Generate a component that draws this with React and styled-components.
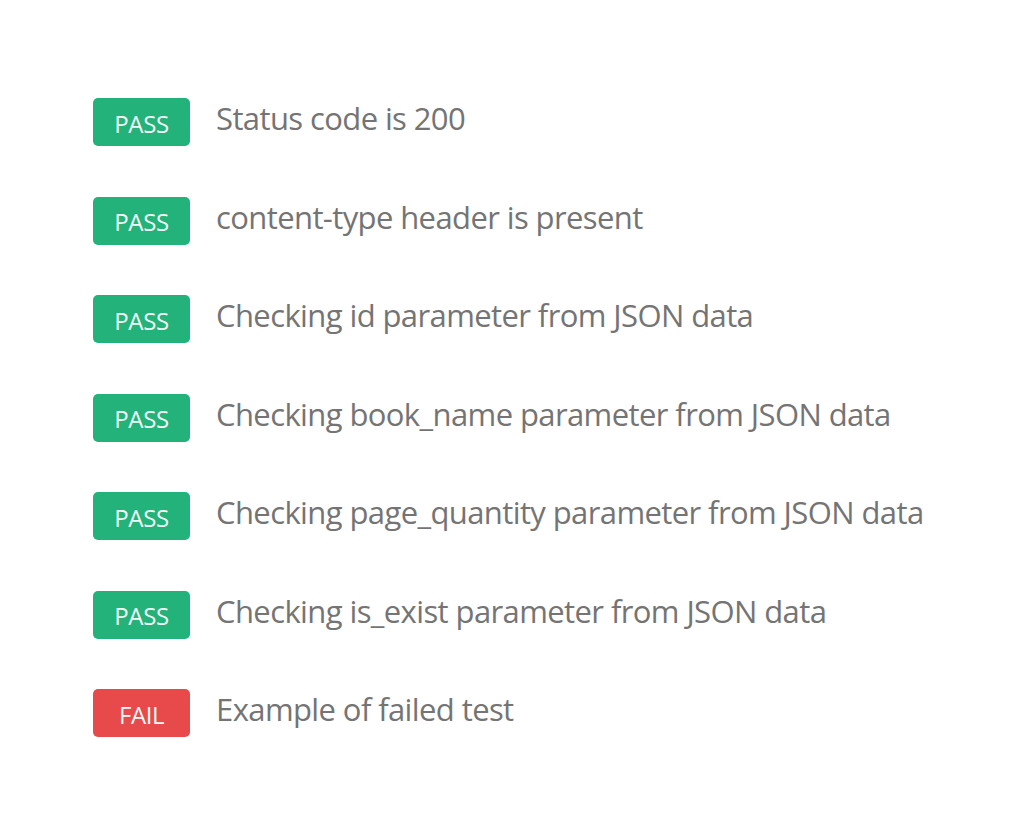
import React from 'react';
import styled, { createGlobalStyle } from 'styled-components';

const GlobalStyle = createGlobalStyle`
  body {
    margin: 0;
    background: #ffffff;
    font-family: "Open Sans", "Noto Sans", sans-serif;
  }
`;

const List = styled.div`
  display: flex;
  flex-direction: column;
  gap: 50.5px;
  padding: 98px 0 0 93px;
`;

const Row = styled.div`
  display: flex;
  align-items: center;
  gap: 26px;
  height: 48px;
`;

const Badge = styled.span`
  display: flex;
  align-items: center;
  justify-content: center;
  width: 97px;
  height: 48px;
  border-radius: 5px;
  background-color: ${p => (p.$fail ? '#e84a4b' : '#22b27a')};
  color: #f2faf6;
  font-size: 24px;
  letter-spacing: -0.4px;
  padding-top: 2px;
  box-sizing: border-box;
`;

const Label = styled.span`
  color: #747474;
  font-size: 31px;
  letter-spacing: -0.6px;
  margin-top: -8px;
`;

const tests = [
  { name: 'Status code is 200', pass: true },
  { name: 'content-type header is present', pass: true },
  { name: 'Checking id parameter from JSON data', pass: true },
  { name: 'Checking book_name parameter from JSON data', pass: true },
  { name: 'Checking page_quantity parameter from JSON data', pass: true },
  { name: 'Checking is_exist parameter from JSON data', pass: true },
  { name: 'Example of failed test', pass: false },
];

function App() {
  return (
    <>
      <GlobalStyle />
      <List>
        {tests.map(test => (
          <Row key={test.name}>
            <Badge $fail={!test.pass}>{test.pass ? 'PASS' : 'FAIL'}</Badge>
            <Label>{test.name}</Label>
          </Row>
        ))}
      </List>
    </>
  );
}

export default App;
